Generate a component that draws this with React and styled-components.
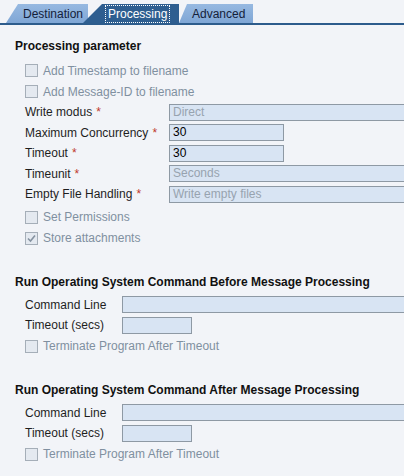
import styled, { createGlobalStyle } from 'styled-components'

const GlobalStyle = createGlobalStyle`
    html, body {
        margin: 0;
        padding: 0;
        background: #f2f4f8;
        overflow: hidden;
    }
    body {
        font-family: "Liberation Sans", Arial, sans-serif;
        font-size: 12px;
        color: #1e1e1e;
    }
`

const Page = styled.div`
    width: 404px;
    height: 476px;
    overflow: hidden;
`

const TabStrip = styled.div`
    display: flex;
    align-items: flex-end;
    height: 19px;
    padding-top: 4px;
    padding-left: 6px;
    border-bottom: 2px solid #2d5c8c;
`

const Tab = styled.div`
    display: flex;
    align-items: center;
    height: 19px;
    width: ${props => props.$width}px;
    margin-left: ${props => props.$overlap ? -props.$overlap : 0}px;
    padding-left: ${props => props.$pad}px;
    box-sizing: border-box;
    font-size: 12px;
    color: ${props => props.$active ? '#ffffff' : '#14213a'};
    background: ${props => props.$active
        ? '#2e5e90'
        : 'linear-gradient(#97b9e1, #7fa6d5)'};
    clip-path: polygon(0 100%, ${props => props.$slant}px 0, 100% 0, 100% 100%);
`

const FocusBox = styled.span`
    display: inline-block;
    padding: 1px 2px;
    line-height: 14px;
    border: 1px dotted #ffffff;
`

const Content = styled.div`
    padding-left: 15px;
`

const Section = styled.div`
    margin-top: ${props => props.$top}px;
`

const Heading = styled.h3`
    margin: 0 0 ${props => props.$after}px 0;
    font-size: 12px;
    font-weight: 700;
    line-height: 16px;
    color: #111111;
`

const FieldRow = styled.div`
    display: grid;
    grid-template-columns: ${props => props.$label}px 1fr;
    align-items: center;
    height: 20.5px;
    padding-left: 10px;
`

const Label = styled.span`
    white-space: nowrap;
    color: #1e1e1e;
`

const Required = styled.span`
    margin-left: 4px;
    color: #c0392b;
`

const Field = styled.div`
    box-sizing: border-box;
    height: 17px;
    width: ${props => props.$wide ? 'calc(100% + 30px)' : `${props.$width}px`};
    padding-left: 3px;
    line-height: 15px;
    background: #d8e4f3;
    border: 1px solid #8e99a4;
    color: ${props => props.$disabled ? '#97a3af' : '#000000'};
    white-space: nowrap;
    overflow: hidden;
`

const CheckRow = styled.div`
    display: flex;
    align-items: center;
    height: 21px;
    padding-left: 10px;
    margin-top: ${props => props.$top || 0}px;
    color: #8090a0;
`

const Box = styled.span`
    display: flex;
    align-items: center;
    justify-content: center;
    box-sizing: border-box;
    width: 13px;
    height: 13px;
    margin-right: 5px;
    background: #e4e9f0;
    border: 1px solid #a5aeb8;
`

const Check = ({ label, checked, top }) => (
    <CheckRow $top={top}>
        <Box>
            {checked && (
                <svg width="9" height="9" viewBox="0 0 9 9">
                    <path d="M1 4.5 L3.5 7 L8 1.5" fill="none" stroke="#8592a0" strokeWidth="1.6" />
                </svg>
            )}
        </Box>
        {label}
    </CheckRow>
)

const Input = ({ label, required, value, disabled, wide, width, labelWidth }) => (
    <FieldRow $label={labelWidth}>
        <Label>
            {label}
            {required && <Required>*</Required>}
        </Label>
        <Field $wide={wide} $width={width} $disabled={disabled}>{value}</Field>
    </FieldRow>
)

const CommandSection = ({ title }) => (
    <Section $top={25}>
        <Heading $after={5}>{title}</Heading>
        <Input label="Command Line" wide labelWidth={97} />
        <Input label="Timeout (secs)" width={70} labelWidth={97} />
        <Check label="Terminate Program After Timeout" />
    </Section>
)

const App = () => {
    return (
        <>
            <GlobalStyle />
            <Page>
                <TabStrip>
                    <Tab $width={82} $slant={12} $pad={17}>Destination</Tab>
                    <Tab $active $width={96} $slant={19} $pad={22} $overlap={5}>
                        <FocusBox>Processing</FocusBox>
                    </Tab>
                    <Tab $width={74} $slant={8} $pad={13}>Advanced</Tab>
                </TabStrip>

                <Content>
                    <Section $top={13}>
                        <Heading $after={6}>Processing parameter</Heading>
                        <Check label="Add Timestamp to filename" />
                        <Check label="Add Message-ID to filename" />
                        <Input label="Write modus" required value="Direct" disabled wide labelWidth={144} />
                        <Input label="Maximum Concurrency" required value="30" width={115} labelWidth={144} />
                        <Input label="Timeout" required value="30" width={115} labelWidth={144} />
                        <Input label="Timeunit" required value="Seconds" disabled wide labelWidth={144} />
                        <Input label="Empty File Handling" required value="Write empty files" disabled wide labelWidth={144} />
                        <Check label="Set Permissions" top={2} />
                        <Check label="Store attachments" checked />
                    </Section>

                    <CommandSection title="Run Operating System Command Before Message Processing" />
                    <CommandSection title="Run Operating System Command After Message Processing" />
                </Content>
            </Page>
        </>
    )
}

export default App
